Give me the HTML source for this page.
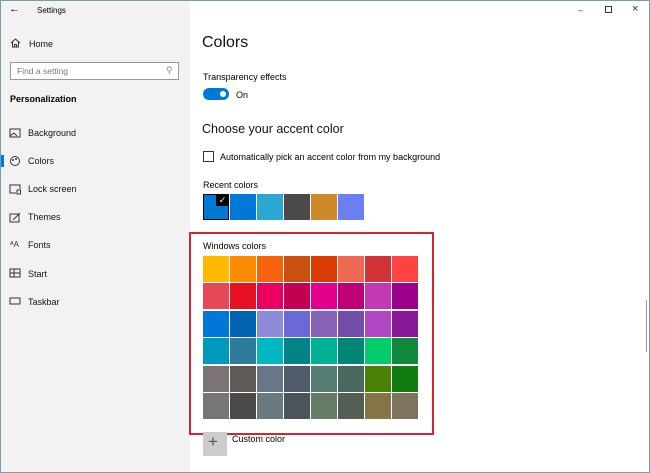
<!DOCTYPE html>
<html><head><style>
*{margin:0;padding:0;box-sizing:border-box}
body{width:650px;height:473px;overflow:hidden;background:#fff;font-family:"Liberation Sans",sans-serif;color:#000;position:relative}
.win{position:absolute;left:0;top:0;width:650px;height:473px;border:1px solid #7a9cb3}
.side{position:absolute;left:1px;top:1px;width:189px;height:471px;background:#f2f2f2}
.t{position:absolute;white-space:nowrap}
.s{font-size:9px}
.nav{font-size:9px;color:#111}
.sw{position:absolute;width:26px;height:26px}
</style></head><body>
<div class="win"></div>
<div class="side"></div>
<div class="t" style="left:9px;top:3px;font-size:11px">&#8592;</div>
<div class="t s" style="left:37px;top:6px;font-size:8px">Settings</div>
<svg class="t" style="left:10px;top:38px" width="11" height="10" viewBox="0 0 11 10"><path d="M1 5 L5.5 1 L10 5 M2.5 4 V9 H8.5 V4 M4.5 9 V6.5 H6.5 V9" fill="none" stroke="#333" stroke-width="1"/></svg>
<div class="t nav" style="left:29px;top:39px">Home</div>
<div style="position:absolute;left:10px;top:62px;width:169px;height:18px;border:1px solid #999;background:#fff"></div>
<div class="t" style="left:17px;top:66px;font-size:8.5px;color:#777">Find a setting</div>
<div class="t" style="left:166px;top:65px;font-size:9px;color:#888">&#9906;</div>
<div class="t" style="left:10px;top:94px;font-size:9px;font-weight:bold">Personalization</div>
<div style="position:absolute;left:1px;top:155px;width:3px;height:12px;background:#0078d7"></div>
<svg class="t" style="left:9px;top:128px" width="12" height="10"><rect x="1" y="1" width="10" height="8" fill="none" stroke="#333"/><path d="M1 8 L5 5 L8 8" fill="none" stroke="#333"/></svg>
<div class="t nav" style="left:28px;top:128px">Background</div>
<svg class="t" style="left:9px;top:155px" width="12" height="12"><circle cx="6" cy="6" r="4.5" fill="none" stroke="#333"/><circle cx="4" cy="5" r="1" fill="#333"/><circle cx="7" cy="4" r="1" fill="#333"/></svg>
<div class="t nav" style="left:28px;top:156px">Colors</div>
<svg class="t" style="left:9px;top:184px" width="12" height="11"><path d="M7 9 H1 V1 H11 V5" fill="none" stroke="#333"/><rect x="8" y="6" width="3.5" height="4" fill="none" stroke="#333"/></svg>
<div class="t nav" style="left:28px;top:184px">Lock screen</div>
<svg class="t" style="left:9px;top:212px" width="12" height="11"><rect x="1" y="2" width="9" height="8" fill="none" stroke="#333"/><path d="M4 8 L11 1" stroke="#333"/></svg>
<div class="t nav" style="left:28px;top:212px">Themes</div>
<div class="t" style="left:10px;top:240px;font-size:8px;color:#333">ᴬA</div>
<div class="t nav" style="left:28px;top:240px">Fonts</div>
<svg class="t" style="left:9px;top:268px" width="12" height="10"><rect x="1" y="1" width="10" height="8" fill="none" stroke="#333"/><path d="M1 5 H11 M5 1 V9" stroke="#333"/></svg>
<div class="t nav" style="left:28px;top:269px">Start</div>
<svg class="t" style="left:9px;top:297px" width="12" height="8"><rect x="1" y="1" width="10" height="6" fill="none" stroke="#333"/></svg>
<div class="t nav" style="left:28px;top:297px">Taskbar</div>

<div class="t" style="left:578px;top:5px;font-size:9px;color:#333">&#8211;</div>
<div style="position:absolute;left:605px;top:6px;width:7px;height:7px;border:1px solid #333"></div>
<div class="t" style="left:632px;top:3px;font-size:11px;color:#333">&#215;</div>

<div class="t" style="left:202px;top:34px;font-size:16px;color:#111">Colors</div>
<div class="t s" style="left:203px;top:72px">Transparency effects</div>
<div style="position:absolute;left:203px;top:88px;width:26px;height:12px;border-radius:6px;background:#0078d7"></div>
<div style="position:absolute;left:220px;top:91px;width:6px;height:6px;border-radius:3px;background:#fff"></div>
<div class="t s" style="left:236px;top:90px">On</div>
<div class="t" style="left:202px;top:122px;font-size:12.5px;color:#111">Choose your accent color</div>
<div style="position:absolute;left:203px;top:151px;width:11px;height:11px;border:1px solid #333"></div>
<div class="t s" style="left:220px;top:152px">Automatically pick an accent color from my background</div>
<div class="t s" style="left:203px;top:180px">Recent colors</div>
<div class="sw" style="left:203px;top:194px;background:#0078d7;border:1px solid #000"></div>
<div style="position:absolute;left:216px;top:194px;width:13px;height:12px;background:#000;color:#fff;font-size:9px;text-align:center;line-height:12px">&#10003;</div>
<div class="sw" style="left:230px;top:194px;background:#0078d7"></div>
<div class="sw" style="left:257px;top:194px;background:#2aa8d2"></div>
<div class="sw" style="left:284px;top:194px;background:#4c4a48"></div>
<div class="sw" style="left:311px;top:194px;background:#ce8a28"></div>
<div class="sw" style="left:338px;top:194px;background:#6b7ff0"></div>

<div style="position:absolute;left:189px;top:232px;width:245px;height:203px;border:2px solid #d4262e"></div>
<div class="t s" style="left:203px;top:241px">Windows colors</div>
<div id="g"></div>
<div style="position:absolute;left:203px;top:432px;width:24px;height:24px;background:#ccc"></div>
<div class="t" style="left:208px;top:432px;font-size:17px;color:#555">+</div>
<div class="t s" style="left:232px;top:434px">Custom color</div>
<div style="position:absolute;left:646px;top:300px;width:1px;height:52px;background:#999"></div>
<script>
var c=[["#FFB900","#FF8C00","#F7630C","#CA5010","#DA3B01","#EF6950","#D13438","#FF4343"],
["#E74856","#E81123","#EA005E","#C30052","#E3008C","#BF0077","#C239B3","#9A0089"],
["#0078D7","#0063B1","#8E8CD8","#6B69D6","#8764B8","#744DA9","#B146C2","#881798"],
["#0099BC","#2D7D9A","#00B7C3","#038387","#00B294","#018574","#00CC6A","#10893E"],
["#7A7574","#5D5A58","#68768A","#515C6B","#567C73","#486860","#498205","#107C10"],
["#767676","#4C4A48","#69797E","#4A5459","#647C64","#525E54","#847545","#7E735F"]];
var ys=[256,283,311,338,366,393];
var h="";for(var r=0;r<6;r++)for(var k=0;k<8;k++)h+='<div class="sw" style="left:'+(203+k*27)+'px;top:'+ys[r]+'px;background:'+c[r][k]+'"></div>';
document.getElementById("g").innerHTML=h;
</script>
</body></html>
